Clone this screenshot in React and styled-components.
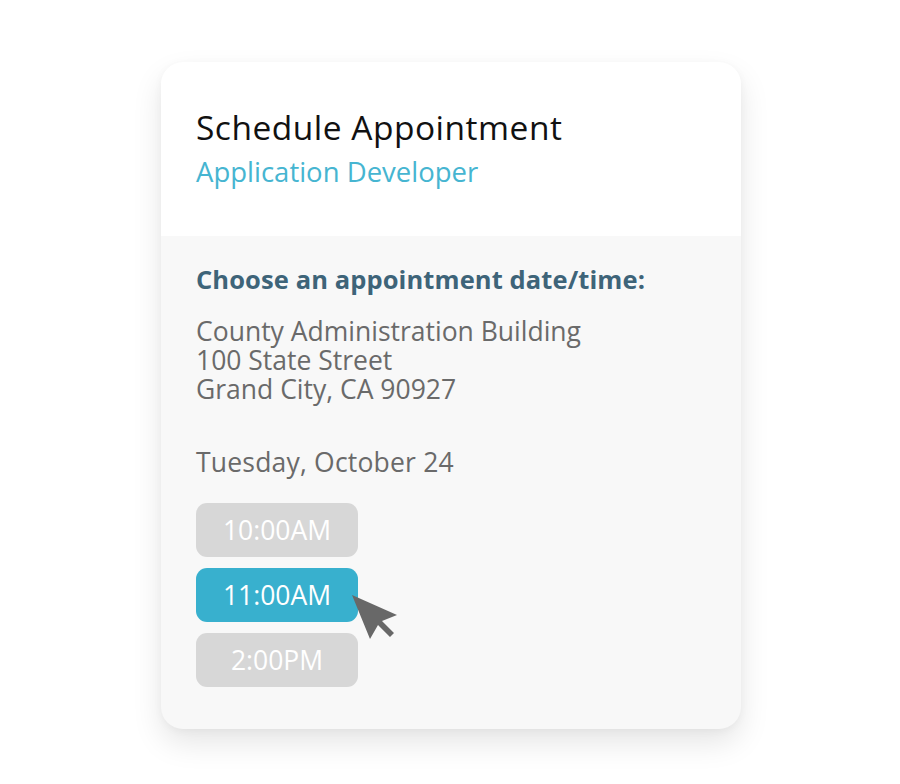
import React from 'react';
import styled, { createGlobalStyle } from 'styled-components';

const GlobalStyle = createGlobalStyle`
  html, body {
    margin: 0;
    padding: 0;
    background: #ffffff;
    font-family: 'Open Sans', 'Liberation Sans', sans-serif;
  }
`;

const Page = styled.div`
  width: 900px;
  height: 784px;
  display: flex;
  justify-content: center;
  padding-top: 62px;
  box-sizing: border-box;
`;

const Card = styled.div`
  width: 580px;
  height: 667px;
  margin-left: 2px;
  border-radius: 22px;
  background: #f8f8f8;
  overflow: hidden;
  box-shadow: 0 14px 30px rgba(0, 0, 0, 0.1), 0 2px 8px rgba(0, 0, 0, 0.04);
  display: flex;
  flex-direction: column;
`;

const Header = styled.div`
  background: #ffffff;
  height: 174px;
  padding: 44px 35px 0;
  box-sizing: border-box;
`;

const Title = styled.h1`
  margin: 0;
  font-size: 33.5px;
  font-weight: 400;
  color: #111111;
  line-height: 42px;
  letter-spacing: 0.5px;
`;

const Subtitle = styled.div`
  margin-top: 7px;
  font-size: 27.5px;
  color: #46b5d1;
  line-height: 34px;
`;

const Body = styled.div`
  padding: 25px 35px 0;
`;

const Prompt = styled.h2`
  margin: 0;
  font-size: 25.5px;
  font-weight: 700;
  color: #3e6479;
  line-height: 36px;
  letter-spacing: 0.1px;
`;

const Address = styled.div`
  margin-top: 20px;
  font-size: 26.5px;
  color: #6a6a6a;
  line-height: 29px;
`;

const DateLine = styled.div`
  margin-top: 43px;
  font-size: 26.5px;
  color: #6a6a6a;
  line-height: 30px;
  letter-spacing: 0.2px;
`;

const Slots = styled.div`
  margin-top: 26px;
  display: flex;
  flex-direction: column;
  gap: 11px;
  align-items: flex-start;
`;

const SlotWrap = styled.div`
  position: relative;
`;

const Slot = styled.button`
  width: 162px;
  height: 54px;
  border: none;
  border-radius: 11px;
  background: ${(p) => (p.$active ? '#38b0ce' : '#d7d7d7')};
  color: #ffffff;
  font-family: 'Open Sans', 'Liberation Sans', sans-serif;
  font-size: 26.5px;
  padding: 0;
  cursor: pointer;
`;

const Pointer = styled.svg`
  position: absolute;
  left: 154px;
  top: 25px;
  width: 50px;
  height: 50px;
`;

const times = ['10:00AM', '11:00AM', '2:00PM'];

export default function App() {
  return (
    <>
      <GlobalStyle />
      <Page>
        <Card>
          <Header>
            <Title>Schedule Appointment</Title>
            <Subtitle>Application Developer</Subtitle>
          </Header>
          <Body>
            <Prompt>Choose an appointment date/time:</Prompt>
            <Address>
              County Administration Building
              <br />
              100 State Street
              <br />
              Grand City, CA 90927
            </Address>
            <DateLine>Tuesday, October 24</DateLine>
            <Slots>
              {times.map((t) => (
                <SlotWrap key={t}>
                  <Slot $active={t === '11:00AM'}>{t}</Slot>
                  {t === '11:00AM' && (
                    <Pointer viewBox="0 0 50 50">
                      <path
                        d="M2 2 L47 22 L32 28 L44 40 L40 44 L28 32 L20 46 Z"
                        fill="#686868"
                        strokeLinejoin="round"
                      />
                    </Pointer>
                  )}
                </SlotWrap>
              ))}
            </Slots>
          </Body>
        </Card>
      </Page>
    </>
  );
}
